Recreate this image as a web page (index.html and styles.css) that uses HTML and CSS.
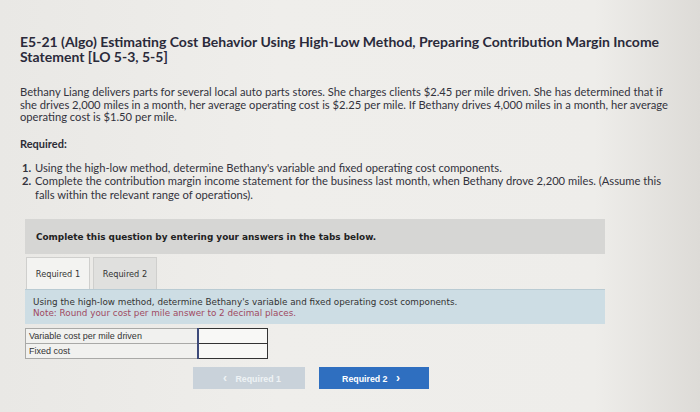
FILE: index.html
```html
<!DOCTYPE html>
<html lang="en">
<head>
<meta charset="utf-8">
<title>E5-21 (Algo)</title>
<link rel="stylesheet" href="styles.css">
</head>
<body>
<main class="page">
  <h1 class="title">E5-21 (Algo) Estimating Cost Behavior Using High-Low Method, Preparing Contribution Margin Income Statement [LO 5-3, 5-5]</h1>
  <p class="intro">Bethany Liang delivers parts for several local auto parts stores. She charges clients $2.45 per mile driven. She has determined that if she drives 2,000 miles in a month, her average operating cost is $2.25 per mile. If Bethany drives 4,000 miles in a month, her average operating cost is $1.50 per mile.</p>
  <p class="required">Required:</p>
  <ol class="reqs">
    <li><span class="num">1.</span><span>Using the high-low method, determine Bethany's variable and fixed operating cost components.</span></li>
    <li><span class="num">2.</span><span>Complete the contribution margin income statement for the business last month, when Bethany drove 2,200 miles. (Assume this falls within the relevant range of operations).</span></li>
  </ol>

  <section class="work">
    <div class="banner">Complete this question by entering your answers in the tabs below.</div>
    <div class="tabs">
      <button class="tab tab-active" type="button">Required 1</button>
      <button class="tab" type="button">Required 2</button>
    </div>
    <div class="instr">
      <div>Using the high-low method, determine Bethany's variable and fixed operating cost components.</div>
      <div class="note">Note: Round your cost per mile answer to 2 decimal places.</div>
    </div>
    <table class="answers">
      <tr><td class="lbl">Variable cost per mile driven</td><td class="inp"></td></tr>
      <tr><td class="lbl">Fixed cost</td><td class="inp"></td></tr>
    </table>
    <div class="nav">
      <button class="btn btn-prev" type="button"><span class="chev">&lsaquo;</span> Required 1</button>
      <button class="btn btn-next" type="button">Required 2 <span class="chev">&rsaquo;</span></button>
    </div>
  </section>
</main>
</body>
</html>
```
FILE: styles.css
```css
html, body {
  margin: 0;
  padding: 0;
}
body {
  width: 700px;
  height: 412px;
  overflow: hidden;
  background: linear-gradient(90deg, #e9e8e5 0%, #efeeeb 40%, #eeedea 85%, #dddbd7 100%);
  color: #2c2c36;
  font-family: Lato, "Open Sans", sans-serif;
}
.page {
  padding: 34px 25px 0 20px;
}
.title {
  margin: 0;
  font-size: 14px;
  line-height: 15px;
  font-weight: 700;
  color: #2a2a3a;
}
.intro {
  margin: 22px 0 0 0;
  padding-right: 5px;
  font-size: 11.2px;
  line-height: 12.5px;
  color: #33333d;
}
.required {
  margin: 14px 0 0 0;
  font-size: 11px;
  font-weight: 700;
  line-height: 12px;
}
.reqs {
  list-style: none;
  margin: 11px 0 0 0;
  padding: 0 0 0 2px;
  font-size: 11.2px;
  line-height: 13.5px;
  color: #33333d;
}
.reqs li {
  display: flex;
  gap: 3px;
}
.reqs .num {
  font-weight: 700;
  width: 10px;
  flex: none;
}
.work {
  margin: 18px 0 0 5px;
  width: 580px;
  font-family: "DejaVu Sans", Verdana, sans-serif;
}
.banner {
  height: 35px;
  box-sizing: border-box;
  padding: 0 11px;
  display: flex;
  align-items: center;
  background: #d6d6d4;
  font-size: 8.9px;
  font-weight: 700;
  color: #222;
}
.tabs {
  display: flex;
  gap: 3px;
  margin-top: 3px;
  padding-left: 1px;
}
.tab {
  box-sizing: border-box;
  width: 64px;
  height: 32px;
  border: 1px solid #cfcfcd;
  border-bottom: none;
  background: #e0e0de;
  font-family: "DejaVu Sans", Verdana, sans-serif;
  font-size: 8.2px;
  color: #333;
  padding: 0;
}
.tab-active {
  background: #f3f3f1;
}
.instr {
  height: 35px;
  box-sizing: border-box;
  padding: 7px 8px 0 8px;
  background: #cddde4;
  border-top: 1px solid #b9cbd3;
  font-size: 8.8px;
  line-height: 10.5px;
  color: #333;
}
.note {
  color: #a04a62;
}
.answers {
  margin-top: 4px;
  border-collapse: collapse;
  font-family: "Liberation Sans", Arial, sans-serif;
  font-size: 9px;
  color: #333;
}
.answers td {
  height: 14px;
  padding: 0 0 0 3px;
}
.lbl {
  width: 168px;
  border: 1px solid #a9a9a7;
  background: #f1f1ef;
}
.inp {
  width: 65px;
  border: 1px solid #333;
  background: #f8f8f6;
  border-left: 2px solid #3d4a7a;
}
.nav {
  display: flex;
  justify-content: center;
  gap: 14px;
  margin-top: 8px;
  padding-right: 8px;
}
.btn {
  height: 22px;
  border: none;
  font-family: "Liberation Sans", Arial, sans-serif;
  font-size: 8.8px;
  font-weight: 700;
  color: #fff;
  padding: 0;
}
.btn-prev {
  width: 112px;
  background: #c9d2da;
  color: #eef2f5;
}
.btn-next {
  width: 110px;
  background: #2f6fc0;
}
.chev {
  font-size: 12px;
  margin: 0 6px;
}
```
